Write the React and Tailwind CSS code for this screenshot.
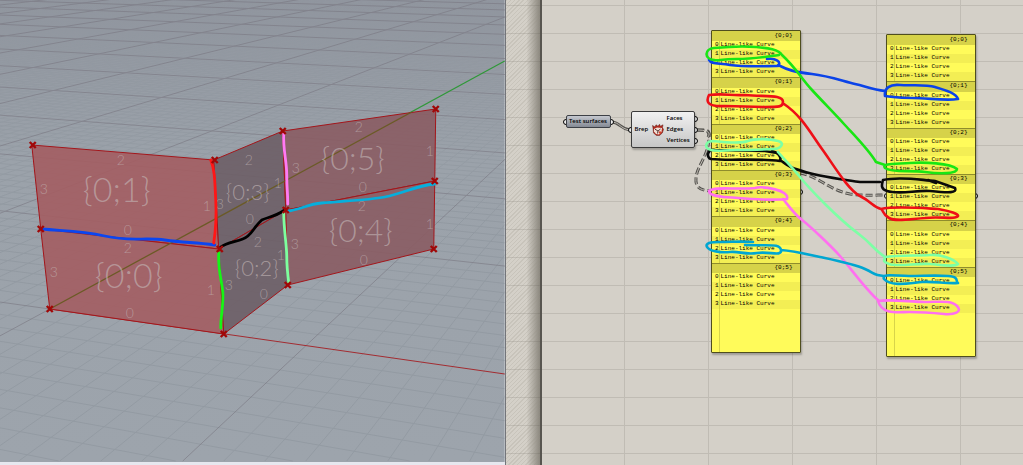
import React from "react";

const faces = [
  { points: "32,145 214,160 219,249 41,229", fill: "#a35d62" },
  { points: "41,229 219,249 224,334 50,309", fill: "#a35d62" },
  { points: "214,160 283,131 286,210 219,249", fill: "#6d5e66" },
  { points: "219,249 286,210 288,285 224,334", fill: "#6d5e66" },
  { points: "283,131 436,109 435,181 286,210", fill: "#8a5c63" },
  { points: "286,210 435,181 434,249 288,285", fill: "#8a5c63" },
];

const corners = [
  [33, 145],
  [215, 160],
  [283, 131],
  [436, 109],
  [41, 229],
  [220, 249],
  [286, 210],
  [435, 181],
  [50, 309],
  [224, 334],
  [288, 285],
  [434, 249],
];

const edges = [
  { d: "M42 229C62 231 80 230 105 236S145 237 165 240S195 242 215 245", color: "#0b46f0" },
  { d: "M211 160C215 170 215 180 216 200S216 230 214 243", color: "#ff1616" },
  { d: "M219 253C218 270 222 280 223 292S221 315 221 328", color: "#16f516" },
  { d: "M284 133C283 150 287 160 287 175S288 190 288 204", color: "#ff7af5" },
  { d: "M221 247C227 242 236 242 243 239C252 236 253 228 262 220C268 217 275 217 285 210", color: "#000000" },
  { d: "M288 211C300 210 308 204 322 203C345 201 370 200 385 197C405 193 415 186 435 184", color: "#06afdc" },
  { d: "M284 213C284 230 287 245 287 256S288 275 289 283", color: "#7dff9e" },
];

const faceLabels = [
  { x: 117, y: 202, text: "{0;1}" },
  { x: 129, y: 288, text: "{0;0}" },
  { x: 248, y: 200, size: 22, text: "{0;3}" },
  { x: 257, y: 276, size: 22, text: "{0;2}" },
  { x: 353, y: 170, size: 32, text: "{0;5}" },
  { x: 361, y: 242, size: 32, text: "{0;4}" },
];

const edgeLabels = [
  [121, 165, "2"],
  [44, 194, "3"],
  [207, 211, "1"],
  [128, 235, "0"],
  [128, 253, "2"],
  [54, 277, "3"],
  [211, 295, "1"],
  [130, 318, "0"],
  [249, 165, "2"],
  [220, 209, "3"],
  [278, 188, "1"],
  [250, 224, "0"],
  [258, 247, "2"],
  [229, 290, "3"],
  [281, 260, "1"],
  [264, 299, "0"],
  [359, 132, "2"],
  [296, 173, "3"],
  [430, 156, "1"],
  [363, 192, "0"],
  [362, 211, "2"],
  [295, 249, "3"],
  [430, 229, "1"],
  [364, 265, "0"],
];

// Both grid directions are evenly spaced along y=461 and meet on the horizon.
const range = (from, to) => Array.from({ length: to - from }, (_, i) => from + i);
const yLines = range(-160, 40).map((n) => ({ n, x: -227 + n * 41, vx: 765, vy: -84 }));
const xLines = range(-22, 190).map((n) => ({ n, x: 1112 + n * 117, vx: -2741, vy: -90 }));

const GridLines = ({ major }) =>
  [...yLines, ...xLines]
    .filter((l) => (l.n % 10 === 0) === major && l.n !== 0)
    .map((l) => <line key={`${l.vx}:${l.n}`} x1={l.x} y1={461} x2={l.vx} y2={l.vy} />);

const Viewport = () => (
  <section className="flex min-w-0 grow-[505] basis-0 flex-col">
    <svg
      className="block min-h-0 w-full flex-1"
      viewBox="0 0 505 462"
      preserveAspectRatio="xMidYMid slice"
      role="img"
      aria-label="Perspective viewport"
    >
      <defs>
        <linearGradient id="floor" x1="0" y1="0" x2="0" y2="1">
          <stop offset="0" stopColor="#9297a0" />
          <stop offset="0.35" stopColor="#9ba2aa" />
          <stop offset="1" stopColor="#9da4ac" />
        </linearGradient>
        <linearGradient id="gridFade" x1="0" y1="0" x2="0" y2="1">
          <stop offset="0" stopColor="#444" />
          <stop offset="0.5" stopColor="#fff" />
        </linearGradient>
        <mask id="gridMask" maskUnits="userSpaceOnUse" x="0" y="0" width="505" height="462">
          <rect width="505" height="462" fill="url(#gridFade)" />
        </mask>
      </defs>
      <rect width="505" height="462" fill="url(#floor)" />
      <g mask="url(#gridMask)" stroke="#858d95" strokeWidth="1" opacity="0.4">
        <GridLines major={false} />
      </g>
      <g stroke="#797781" strokeWidth="1" opacity="0.6">
        <GridLines major />
        <path d="M0 302L50 309M0 336L50 309" />
      </g>
      <path d="M50 309L505 374" stroke="#a32c31" />
      <path d="M50 309L505 61" stroke="#2f9838" strokeWidth="1.3" />

      <g fillOpacity="0.9" stroke="#a3161b" strokeWidth="1">
        {faces.map((f) => (
          <polygon key={f.points} points={f.points} fill={f.fill} />
        ))}
      </g>
      <path d="M50 309L412 112" stroke="#6c5a25" strokeWidth="1.2" />

      <g fill="#c3b7b7" fillOpacity="0.62" textAnchor="middle" fontFamily="Lato, sans-serif" fontWeight="300">
        {faceLabels.map((l) => (
          <text key={l.text} x={l.x} y={l.y} fontSize={l.size || 34}>
            {l.text}
          </text>
        ))}
        {edgeLabels.map(([x, y, text]) => (
          <text key={`${x}-${y}`} x={x} y={y} fontSize="14">
            {text}
          </text>
        ))}
      </g>

      <g fill="none" strokeWidth="2.8" strokeLinecap="round">
        {edges.map((e) => (
          <path key={e.color} d={e.d} stroke={e.color} />
        ))}
      </g>
      <g stroke="#a00808" strokeWidth="2.4">
        {corners.map(([x, y]) => (
          <path key={`${x}-${y}`} d={`M${x - 3} ${y - 3}l6 6m0 -6l-6 6`} />
        ))}
      </g>
    </svg>
    <div className="h-[3px] bg-[#e6e8ef]" />
  </section>
);

const Grip = () => <i className="block size-[6px] shrink-0 rounded-full border border-black bg-[#eee]" />;

const Panel = ({ className }) => (
  <article className={`absolute flex items-center ${className}`}>
    <Grip />
    <div className="relative z-10 -mx-[4px] w-[90px] rounded-[1px] border border-[#4f4e1e] bg-[#fffb5a] font-['Liberation_Mono',monospace] text-[6px] leading-[8px] text-black shadow-[1px_2px_2px_rgba(0,0,0,0.25)]">
      <div className="grid h-[278px] grid-rows-6">
        {[0, 1, 2, 3, 4, 5].map((branch) => (
          <section key={branch} className="group flex min-h-0 flex-col">
            <h2 className="min-h-0 flex-1 border-t border-[#8f8c2c] bg-[#d6d249] pr-[7px] text-right group-first:border-[#d6d249]">
              {`{0;${branch}}`}
            </h2>
            <ol>
              {[0, 1, 2, 3].map((i) => (
                <li key={i} className="flex h-[9px] odd:bg-[#fffb5a] even:bg-[#f3ee54]">
                  <span className="w-2 border-r border-[#d2ce45] text-right">{i}</span>
                  <span className="pl-px">Line-like Curve</span>
                </li>
              ))}
            </ol>
          </section>
        ))}
      </div>
      <div className="h-[43px]">
        <div className="h-full w-2 border-r border-[#d8d44a]" />
      </div>
    </div>
    <Grip />
  </article>
);

const BrepIcon = () => (
  <svg viewBox="0 0 12 12" className="size-3 shrink-0" aria-hidden="true">
    <path
      d="M1 4L0.5 1.5L3 3L4 0.8L6 2.2L7.5 0.3L8.5 2.3L11 0.8L10.5 3.5L11.5 5.5L10.3 9L7.5 11.5H4.5L1.5 9Z"
      fill="#b3281d"
      stroke="#61231c"
      strokeWidth="0.5"
    />
    <path d="M2 5L5 3.6L10 4L9.5 8L7 10.5L4 10L2 7.5Z" fill="#f1ded4" />
    <path d="M3 5.2L6 7L8.5 5M6 7L5.5 9.5" fill="none" stroke="#4a2422" strokeWidth="0.9" />
    <circle cx="8" cy="8.4" r="1.2" fill="#d9412c" />
  </svg>
);

// Hand-drawn strokes that tie each pair of matching curves together.
const marks = [
  {
    color: "#0a0a0a",
    d: "M777 153L765 151L715 150C707 148 706 158 711 159C730 161 755 158 780 161C782 156 777 152 772 151M780 160C786 164 790 168 796 169C818 177 840 179 860 182L880 182M883 180C900 176 920 180 935 181L955 188C957 193 950 193 930 191C915 190 900 195 887 191C880 189 882 184 883 180ZM928 180L936 183L934 181",
  },
  {
    color: "#ee0f17",
    d: "M709 95C725 93 730 96 745 95C765 97 783 94 783 102C783 107 779 107 765 107L725 106C706 107 706 101 709 95ZM784 104C802 116 811 134 822 149S848 190 860 196S873 207 881 209M881 209C895 206 920 208 938 209C950 211 959 214 958 216C955 220 940 216 925 218C910 219 896 222 889 218S884 211 881 209",
  },
  {
    color: "#0b43e8",
    d: "M709 60C711 64 717 63 730 65C745 67 765 66 778 66C782 62 776 58 767 59M778 65C788 70 794 72 812 74S845 82 855 84S872 90 885 91M885 96C884 88 890 84 900 85S925 84 935 87S956 93 958 99C945 101 928 98 912 98S896 97 885 96Z",
  },
  {
    color: "#19e614",
    d: "M779 55C770 56 755 59 737 59S720 61 714 60C704 59 704 49 714 48S745 46 756 47S779 49 782 55C797 69 800 77 812 90S834 113 844 124S869 150 876 162L885 165M885 168C881 163 896 164 910 163S950 163 957 169C957 174 940 174 925 172S892 173 885 168Z",
  },
  {
    color: "#7dffa5",
    d: "M713 141C723 142 740 144 748 141S770 139 778 141S780 149 774 149C757 150 747 150 735 150S719 152 711 150S706 141 713 141ZM778 152C784 159 792 167 800 177S816 195 825 204S848 226 860 235S873 249 885 257M885 257C898 255 920 256 930 255S954 259 958 264C955 267 943 265 930 264S897 267 889 264S885 260 885 257",
  },
  {
    color: "#ff6ff0",
    d: "M709 191C715 186 737 190 755 188C763 186 790 190 787 199C775 200 750 199 738 198S709 197 709 191ZM783 199C788 205 794 214 802 220S831 246 840 256S866 290 878 300M878 301C892 299 910 302 925 302S951 300 957 306S954 315 944 314S920 312 909 312S882 315 878 301Z",
  },
  {
    color: "#00a6d1",
    d: "M753 242C740 241 732 242 721 242S705 243 707 247S721 253 730 252S745 255 757 253S782 257 781 250S769 246 745 245M781 250C795 251 806 254 820 257S854 264 865 269S873 275 884 276M884 279C881 273 895 276 909 276S936 275 948 276S955 281 958 283C946 284 934 281 922 282S891 287 884 279Z",
  },
];

const doubleWires = [
  { d: "M611 122C620 122 620 129 630 130" },
  { d: "M697 130C704 130 709 129 709 134C710 155 697 165 696 178C695 189 702 190 710 191", dash: "7 3" },
  { d: "M697 130C712 130 710 135 707 138M800 173C818 176 829 190 850 194C865 196 876 195 884 195", dash: "7 3" },
];

const Canvas = () => (
  <section className="relative min-w-0 grow-[518] basis-0 overflow-hidden border-l border-[#73757a] bg-[#d4d0c8] bg-[linear-gradient(#c0bcb4_1px,transparent_1px),linear-gradient(90deg,#c0bcb4_1px,transparent_1px)] bg-[size:84px_28px] bg-[position:34px_5px]">
    <div className="h-full w-9 border-r-2 border-[#57554f] bg-[repeating-linear-gradient(135deg,rgba(150,145,132,0.2)_0_1px,transparent_1px_3px),linear-gradient(90deg,transparent_60%,rgba(80,76,66,0.55))]" />

    <svg className="pointer-events-none absolute inset-0 size-full" aria-hidden="true">
      <g transform="translate(-506 0)" fill="none">
        {doubleWires.map((w) => (
          <g key={w.d} strokeDasharray={w.dash}>
            <path d={w.d} stroke="#55534f" strokeWidth="3" />
            <path d={w.d} stroke="#bcb8b0" strokeWidth="1" />
          </g>
        ))}
      </g>
    </svg>

    <article className="absolute left-[57px] top-[115px] flex items-center">
      <Grip />
      <h2 className="relative z-10 -mx-[3px] h-[13px] w-[45px] rounded-[2px] border border-[#3d4046] bg-linear-to-b from-[#c5c8cf] to-[#858a94] text-center font-['Open_Sans',sans-serif] text-[6px] font-semibold leading-[11px] text-black">
        Test surfaces
      </h2>
      <Grip />
    </article>

    <article className="absolute left-[122px] top-[111px] flex items-center">
      <Grip />
      <div className="relative z-10 -mx-[3px] flex h-[37px] w-[64px] items-center rounded-[2px] border border-[#3b3b3b] bg-linear-to-b from-[#f1f1f1] to-[#c6c6c6] pl-[3px] font-['Open_Sans',sans-serif] text-[6px] font-semibold leading-[11px] text-black shadow-[1px_2px_2px_rgba(0,0,0,0.25)]">
        <span className="w-[17px]">Brep</span>
        <BrepIcon />
        <ul className="ml-[3px]">
          <li>Faces</li>
          <li>Edges</li>
          <li>Vertices</li>
        </ul>
      </div>
      <div className="flex flex-col gap-[5px]">
        <Grip />
        <Grip />
        <Grip />
      </div>
    </article>

    <Panel className="left-[203px] top-[30px]" />
    <Panel className="left-[378px] top-[34px]" />

    <svg className="pointer-events-none absolute inset-0 z-20 size-full" aria-hidden="true">
      <g transform="translate(-506 0)" fill="none" strokeWidth="2.6" strokeLinecap="round" strokeLinejoin="round">
        {marks.map((m) => (
          <path key={m.color} d={m.d} stroke={m.color} />
        ))}
      </g>
    </svg>
  </section>
);

const App = () => {
  return (
    <main className="flex h-screen w-full overflow-hidden">
      <Viewport />
      <Canvas />
    </main>
  );
};

export default App;
